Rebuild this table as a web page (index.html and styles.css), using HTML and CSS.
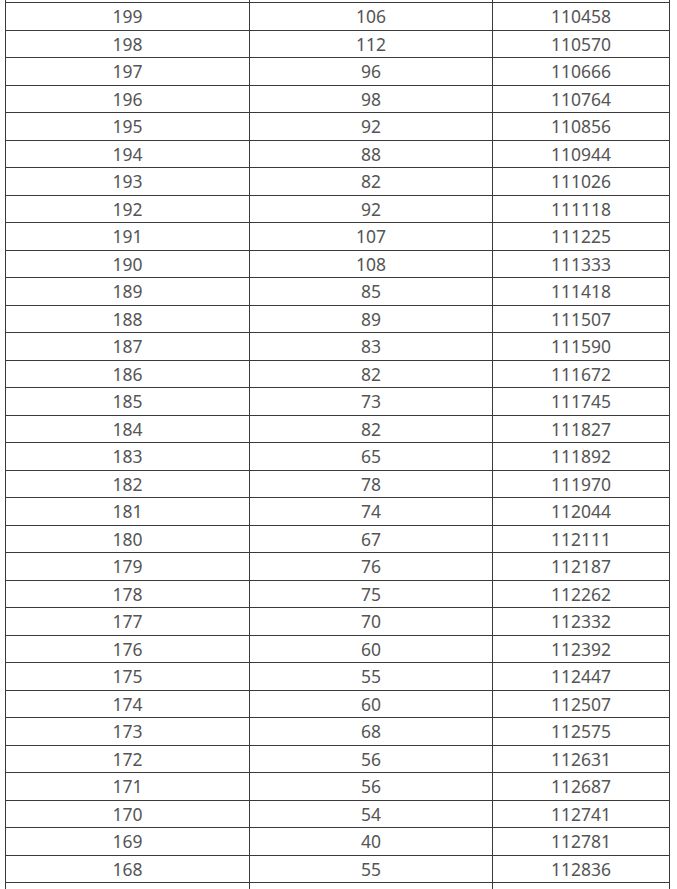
FILE: index.html
```html
<!DOCTYPE html>
<html lang="zh-CN">
<head>
<meta charset="utf-8">
<title>分数段统计表</title>
<link rel="stylesheet" href="styles.css">
</head>
<body>
<div class="sheet">
  <div class="cell edge"></div><div class="cell edge"></div><div class="cell edge"></div>
  <div class="cell">199</div><div class="cell">106</div><div class="cell">110458</div>
  <div class="cell">198</div><div class="cell">112</div><div class="cell">110570</div>
  <div class="cell">197</div><div class="cell">96</div><div class="cell">110666</div>
  <div class="cell">196</div><div class="cell">98</div><div class="cell">110764</div>
  <div class="cell">195</div><div class="cell">92</div><div class="cell">110856</div>
  <div class="cell">194</div><div class="cell">88</div><div class="cell">110944</div>
  <div class="cell">193</div><div class="cell">82</div><div class="cell">111026</div>
  <div class="cell">192</div><div class="cell">92</div><div class="cell">111118</div>
  <div class="cell">191</div><div class="cell">107</div><div class="cell">111225</div>
  <div class="cell">190</div><div class="cell">108</div><div class="cell">111333</div>
  <div class="cell">189</div><div class="cell">85</div><div class="cell">111418</div>
  <div class="cell">188</div><div class="cell">89</div><div class="cell">111507</div>
  <div class="cell">187</div><div class="cell">83</div><div class="cell">111590</div>
  <div class="cell">186</div><div class="cell">82</div><div class="cell">111672</div>
  <div class="cell">185</div><div class="cell">73</div><div class="cell">111745</div>
  <div class="cell">184</div><div class="cell">82</div><div class="cell">111827</div>
  <div class="cell">183</div><div class="cell">65</div><div class="cell">111892</div>
  <div class="cell">182</div><div class="cell">78</div><div class="cell">111970</div>
  <div class="cell">181</div><div class="cell">74</div><div class="cell">112044</div>
  <div class="cell">180</div><div class="cell">67</div><div class="cell">112111</div>
  <div class="cell">179</div><div class="cell">76</div><div class="cell">112187</div>
  <div class="cell">178</div><div class="cell">75</div><div class="cell">112262</div>
  <div class="cell">177</div><div class="cell">70</div><div class="cell">112332</div>
  <div class="cell">176</div><div class="cell">60</div><div class="cell">112392</div>
  <div class="cell">175</div><div class="cell">55</div><div class="cell">112447</div>
  <div class="cell">174</div><div class="cell">60</div><div class="cell">112507</div>
  <div class="cell">173</div><div class="cell">68</div><div class="cell">112575</div>
  <div class="cell">172</div><div class="cell">56</div><div class="cell">112631</div>
  <div class="cell">171</div><div class="cell">56</div><div class="cell">112687</div>
  <div class="cell">170</div><div class="cell">54</div><div class="cell">112741</div>
  <div class="cell">169</div><div class="cell">40</div><div class="cell">112781</div>
  <div class="cell">168</div><div class="cell">55</div><div class="cell">112836</div>
  <div class="cell edge"></div><div class="cell edge"></div><div class="cell edge"></div>
</div>
</body>
</html>
```

FILE: styles.css
```css
html, body {
  margin: 0;
  padding: 0;
  background: #ffffff;
  overflow: hidden;
}

.sheet {
  display: grid;
  grid-template-columns: 243px 242px 176px;
  grid-template-rows: 2px repeat(32, 26.5px) 12px;
  column-gap: 1px;
  row-gap: 1px;
  width: max-content;
  margin-left: 5px;
  background: #3a3a3a;
  border-left: 1px solid #3a3a3a;
  border-right: 1px solid #3a3a3a;
}

.cell {
  background: #ffffff;
  display: flex;
  align-items: center;
  justify-content: center;
  font-family: "Noto Sans", "Open Sans", "Noto Sans CJK SC", sans-serif;
  font-size: 17.5px;
  color: #555555;
  line-height: 1;
  padding-top: 1px;
  box-sizing: border-box;
}

.cell.edge {
  padding: 0;
}
```
